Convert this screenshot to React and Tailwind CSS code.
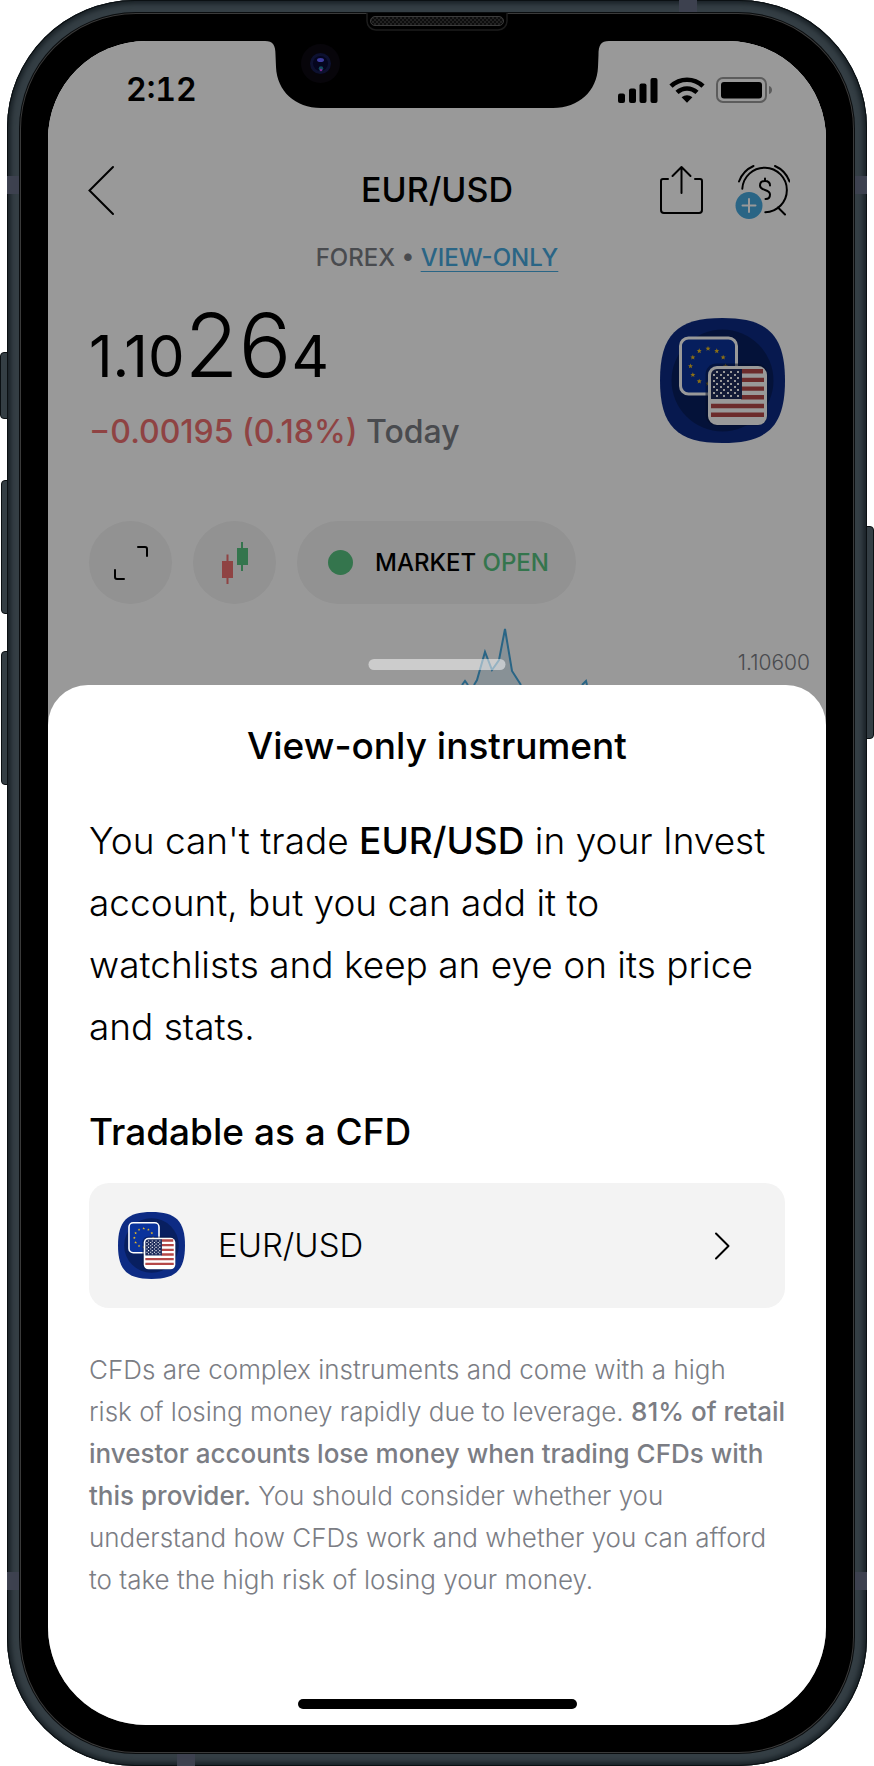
import { Fragment } from 'react';

const STAR_ANGLES = [0, 30, 60, 90, 120, 150, 180, 210, 240, 270, 300, 330];

const SUMMARY_LINES = [
  [{ text: "You can't trade " }, { text: 'EUR/USD', strong: true }, { text: ' in your Invest' }],
  [{ text: 'account, but you can add it to' }],
  [{ text: 'watchlists and keep an eye on its price' }],
  [{ text: 'and stats.' }]
];

const RISK_LINES = [
  [{ text: 'CFDs are complex instruments and come with a high' }],
  [{ text: 'risk of losing money rapidly due to leverage. ' }, { text: '81% of retail', strong: true }],
  [{ text: 'investor accounts lose money when trading CFDs with', strong: true }],
  [{ text: 'this provider.', strong: true }, { text: ' You should consider whether you' }],
  [{ text: 'understand how CFDs work and whether you can afford' }],
  [{ text: 'to take the high risk of losing your money.' }]
];

export default function App() {
  return (
    <main className="relative bg-white px-[7px] font-['Inter','Liberation_Sans',sans-serif] text-black">
      <SideButtons />
      <div className="relative rounded-[128px] bg-[#343e44] p-[13px] shadow-[inset_0_0_0_1px_#0b1013,inset_0_0_4px_4px_#1b2328]">
        <AntennaBands />
        <div className="relative rounded-[116px] bg-black p-7 shadow-[0_0_0_1px_#0a0d0f,inset_0_0_0_1px_#3a3a3a]">
          <Speaker />
          <div className="relative overflow-hidden rounded-[98px] bg-[#999999]">
            <InstrumentScreen />
            <ViewOnlySheet />
            <Notch />
          </div>
        </div>
      </div>
    </main>
  );
}

function InstrumentScreen() {
  return (
    <section className="relative h-[644px] bg-white">
      <StatusBar />

      <header className="mt-[53px] grid grid-cols-[1fr_auto_1fr] items-center px-9">
        <button type="button" aria-label="Back" className="ml-1 w-8">
          <svg viewBox="0 0 32 52" className="h-[52px] w-8" fill="none" stroke="currentColor" strokeWidth="2" strokeLinecap="round">
            <path d="M25 3 1.500 26.500 25 50" />
          </svg>
        </button>
        <h1 className="text-[34px] font-medium leading-[52px]">EUR/USD</h1>
        <div className="flex justify-end gap-8">
          <button type="button" aria-label="Share">
            <ShareIcon />
          </button>
          <button type="button" aria-label="Add price alert">
            <AlertIcon />
          </button>
        </div>
      </header>

      <p className="mt-[26px] text-center text-2xl font-medium leading-8 text-[#7b7d84]">
        FOREX •{' '}
        <a href="#view-only" className="text-[#46a8de] underline decoration-1 underline-offset-[5px]">VIEW-ONLY</a>
      </p>

      <div className="mt-11 flex items-start justify-between px-[41px]">
        <div>
          <p className="whitespace-nowrap text-[58px] leading-[54px]">
            1.10<span className="text-[88px] font-light">26</span>4
          </p>
          <p className="mt-[29px] whitespace-nowrap text-[32px] font-medium leading-10 text-[#7b7d84]">
            <span className="text-[#ee7171]">−0.00195 (0.18%)</span> Today
          </p>
        </div>
        <PairLogo className="size-[125px]" />
      </div>

      <div className="mt-[69px] flex gap-[21px] px-[41px]">
        <button type="button" aria-label="Expand chart" className="flex size-[83px] items-center justify-center rounded-full bg-[#f3f3f3]">
          <svg viewBox="0 0 36 36" className="size-9" fill="none" stroke="currentColor" strokeWidth="2" strokeLinecap="round" strokeLinejoin="round">
            <path d="M25 2h7a2 2 0 0 1 2 2v7M2 25v7a2 2 0 0 0 2 2h7" />
          </svg>
        </button>
        <button type="button" aria-label="Chart type" className="flex size-[83px] items-center justify-center rounded-full bg-[#f3f3f3]">
          <svg viewBox="0 0 26 42" className="h-[42px] w-[26px]">
            <path fill="#ee7171" d="M4.500 12.500h2v6.500h4.500v17H6.500v6h-2v-6H0V19h4.500z" />
            <path fill="#58c380" d="M19 0h2v6h5v17h-5v6h-2v-6h-4V6h4z" />
          </svg>
        </button>
        <button type="button" className="flex h-[83px] w-[279px] items-center gap-[22px] rounded-full bg-[#f3f3f3] pl-[31px] text-2xl font-medium">
          <span className="size-[25px] rounded-full bg-[#58c380]" />
          <span className="whitespace-nowrap">MARKET <span className="text-[#58c380]">OPEN</span></span>
        </button>
      </div>

      <PriceLine />
      <div className="absolute inset-0 bg-black/40" />
      <div className="absolute bottom-[15px] left-1/2 h-[11px] w-[137px] -translate-x-1/2 rounded-full bg-white/50" />
    </section>
  );
}

function StatusBar() {
  return (
    <div className="flex items-center justify-between pl-[78px] pr-[53px] pt-7">
      <time className="text-[32px] font-semibold leading-[42px] tabular-nums">2:12</time>
      <div className="flex items-center gap-[11px]">
        <svg viewBox="0 0 40 25" className="h-[25px] w-10">
          <rect y="15.500" width="7" height="9.500" rx="2" />
          <rect x="11" y="10.500" width="7" height="14.500" rx="2" />
          <rect x="21.500" y="5.500" width="7" height="19.500" rx="2" />
          <rect x="32.500" width="7" height="25" rx="2" />
        </svg>
        <svg viewBox="0 0 36 26" className="h-[26px] w-9" fill="none" stroke="currentColor" strokeWidth="4.600">
          <path d="M2 9.200C11 .500 25 .500 34 9.200" />
          <path d="M8 15.400c6-5.300 14-5.300 20 0" />
          <path d="M12.600 20.300c3.200-2.700 7.600-2.700 10.800 0L18 25.700z" fill="currentColor" stroke="none" />
        </svg>
        <svg viewBox="0 0 57 26" className="h-[26px] w-[57px]">
          <rect x="1" y="1" width="49" height="24" rx="6" fill="none" stroke="#000" strokeOpacity=".4" strokeWidth="2" />
          <rect x="5" y="5" width="41" height="16.500" rx="3" />
          <path d="M53 9c4 1 4 7 0 8z" fillOpacity=".4" />
        </svg>
      </div>
    </div>
  );
}

function ShareIcon() {
  return (
    <svg viewBox="0 0 43 52" className="h-[52px] w-[43px]" fill="none" stroke="currentColor" strokeWidth="2" strokeLinecap="round" strokeLinejoin="round">
      <path d="M8 15H3a2 2 0 0 0-2 2v29a3 3 0 0 0 3 3h35a3 3 0 0 0 3-3V17a2 2 0 0 0-2-2h-5" />
      <path d="M21.500 29V3M12.500 12l9-9 9 9" />
    </svg>
  );
}

function AlertIcon() {
  return (
    <svg viewBox="0 0 55 56" className="-mb-1 h-14 w-[55px]" fill="none" stroke="currentColor" strokeWidth="2" strokeLinecap="round">
      <path d="M7.300 24.800a22.300 22.300 0 1 1 23 23.500" />
      <path d="M4 17.500A27 27 0 0 1 18.500 2M54.500 17.500A27 27 0 0 0 40 2M43 43.500l7 7" />
      <path d="M35 21.500c0-3-2-4.500-5-4.500s-5 1.700-5 4.500c0 6 10 3 10 9 0 2.800-1.700 4.500-4.500 4.500M30 14.500V17" />
      <circle cx="14" cy="41.500" r="13.500" fill="#46a8de" stroke="none" />
      <path stroke="#fff" d="M14 35v13M7.500 41.500h13" />
    </svg>
  );
}

function PairLogo({ className }) {
  return (
    <svg viewBox="0 0 125 125" className={className} aria-hidden="true">
      <path fill="#0d2b84" d="M62.500 0C108 0 125 17 125 62.500S108 125 62.500 125 0 108 0 62.500 17 0 62.500 0z" />
      <circle cx="62.500" cy="62.500" r="51" fill="#081f60" />
      <rect x="20.500" y="20" width="56" height="56" rx="8" fill="#0a339c" stroke="#fff" strokeWidth="3" />
      {STAR_ANGLES.map((angle) => (
        <g key={angle} transform={`rotate(${angle} 48 48)`}>
          <path
            fill="#e8b923"
            transform={`rotate(${-angle} 48 30.500)`}
            d="M48 28l.7 1.700 1.800.1-1.400 1.200.5 1.800-1.600-1-1.600 1 .5-1.800-1.400-1.200 1.800-.1z"
          />
        </g>
      ))}
      <rect x="45.500" y="45.500" width="62" height="62" rx="11" fill="#04123a" fillOpacity=".5" />
      <rect x="48" y="48" width="59" height="59" rx="9" fill="#fff" />
      <path
        stroke="#b54848"
        strokeWidth="4.400"
        d="M81 53.200h22M81 61.900h23M81 70.600h23M81 79.300h23M51 88h53M51 96.700h53"
      />
      <path fill="#1e2c5c" d="M57 51h25v30H51V57a6 6 0 0 1 6-6z" />
      <path
        stroke="#fff"
        strokeWidth="2"
        strokeDasharray="2 5"
        d="M56 54h25M53 57h28M56 60h25M53 63h28M56 66h25M53 69h28M56 72h25M53 75h28M56 78h25"
      />
    </svg>
  );
}

function PriceLine() {
  return (
    <>
      <svg viewBox="0 0 140 58" className="absolute bottom-0 left-[412px] h-[58px] w-[140px]" fill="none">
        <path
          fill="#46a8de"
          fillOpacity=".15"
          d="M14 58l3-5 8-28 7 18 7-10 6-31 7 42 9 14z"
        />
        <path
          stroke="#46a8de"
          strokeWidth="2"
          d="M2 58l3-4 3 4M14 58l3-5 8-28 7 18 7-10 6-31 7 42 9 14M122 58l4-4 1 4"
        />
      </svg>
      <p className="absolute bottom-2 right-4 text-[21px] font-light leading-7 text-[#7b7d84]">1.10600</p>
    </>
  );
}

function ViewOnlySheet() {
  return (
    <section id="view-only" aria-labelledby="sheet-title" className="relative rounded-t-[40px] bg-white px-[41px] pb-4 pt-[35px]">
      <h2 id="sheet-title" className="text-center text-[37px] font-medium leading-[52px]">View-only instrument</h2>

      <p className="mt-[38px] whitespace-nowrap text-[37px] font-light leading-[62px]">
        <TextLines lines={SUMMARY_LINES} />
      </p>

      <h3 className="mt-12 text-[37px] font-medium leading-[52px]">Tradable as a CFD</h3>

      <a href="#cfd" className="mt-[25px] flex h-[125px] items-center rounded-[20px] bg-[#f3f3f3] pl-[29px] pr-[54px]">
        <PairLogo className="size-[67px]" />
        <span className="ml-[33px] text-[33px] font-light">EUR/USD</span>
        <svg viewBox="0 0 18 30" className="ml-auto h-[30px] w-[18px]" fill="none" stroke="currentColor" strokeWidth="2" strokeLinecap="round" strokeLinejoin="round">
          <path d="M3 2.500 15.500 15 3 27.500" />
        </svg>
      </a>

      <p className="mt-[41px] whitespace-nowrap text-[26px] font-light leading-[42px] text-[#7b7d84]">
        <TextLines lines={RISK_LINES} />
      </p>

      <div className="mx-auto mt-[98px] h-2.5 w-[279px] rounded-full bg-black" />
    </section>
  );
}

function TextLines({ lines }) {
  return lines.map((parts, index) => (
    <Fragment key={index}>
      {index > 0 ? <br /> : null}
      {parts.map((part) => (
        part.strong
          ? <strong key={part.text} className="font-medium">{part.text}</strong>
          : <Fragment key={part.text}>{part.text}</Fragment>
      ))}
    </Fragment>
  ));
}

function Notch() {
  return (
    <svg viewBox="0 0 344 68" className="absolute left-1/2 top-0 h-[68px] w-[344px] -translate-x-1/2" aria-hidden="true">
      <path d="M0 0C8 0 10.500 4 10.500 14L11 26C12 50 30 67 56 67H288C314 67 332 50 333 26L333.500 14C333.500 4 336 0 344 0z" />
      <circle cx="55.500" cy="22.500" r="19.500" fill="#07050a" />
      <circle cx="55.500" cy="22.500" r="10.500" fill="#0d1130" />
      <circle cx="55.500" cy="22.500" r="7.500" fill="#05061e" />
      <ellipse cx="55.500" cy="19" rx="3.500" ry="2" fill="#3d3da0" />
      <circle cx="56" cy="27.500" r="2.300" fill="#124a5c" />
      <circle cx="56" cy="29" r="1.200" fill="#7a2890" />
    </svg>
  );
}

function Speaker() {
  return (
    <svg viewBox="0 0 142 18" className="absolute left-1/2 top-0 h-[18px] w-[142px] -translate-x-1/2" aria-hidden="true">
      <defs>
        <pattern id="mesh" width="4" height="4" patternUnits="userSpaceOnUse">
          <rect width="4" height="4" fill="#222" />
          <circle cx="1" cy="1" r="1" fill="#050505" />
          <circle cx="3" cy="3" r="1" fill="#050505" />
        </pattern>
      </defs>
      <path d="M1 0v8a9 9 0 0 0 9 9h122a9 9 0 0 0 9-9V0" fill="#000" stroke="#1c1c1c" strokeWidth="1.500" />
      <rect x="4.500" y="3.500" width="133" height="9" rx="4.500" fill="url(#mesh)" stroke="#3b3b3b" />
    </svg>
  );
}

function AntennaBands() {
  return (
    <div aria-hidden="true">
      <span className="absolute left-0 top-44 h-[18px] w-3 bg-[#3d414f]" />
      <span className="absolute right-0 top-44 h-[18px] w-3 bg-[#3d414f]" />
      <span className="absolute bottom-44 left-0 h-[18px] w-3 bg-[#3d414f]" />
      <span className="absolute bottom-44 right-0 h-[18px] w-3 bg-[#3d414f]" />
      <span className="absolute right-[170px] top-0 h-3 w-[18px] bg-[#3d414f]" />
      <span className="absolute bottom-0 left-[170px] h-3 w-[18px] bg-[#3d414f]" />
    </div>
  );
}

function SideButtons() {
  return (
    <div aria-hidden="true">
      <span className="absolute left-0 top-[352px] h-[67px] w-2 rounded-l-sm border border-[#0b1013] bg-[#343e44]" />
      <span className="absolute left-px top-[480px] h-[134px] w-2 rounded-l-sm border border-[#0b1013] bg-[#343e44]" />
      <span className="absolute left-px top-[651px] h-[134px] w-2 rounded-l-sm border border-[#0b1013] bg-[#343e44]" />
      <span className="absolute right-0 top-[526px] h-[213px] w-2 rounded-r-sm border border-[#0b1013] bg-[#343e44]" />
    </div>
  );
}
